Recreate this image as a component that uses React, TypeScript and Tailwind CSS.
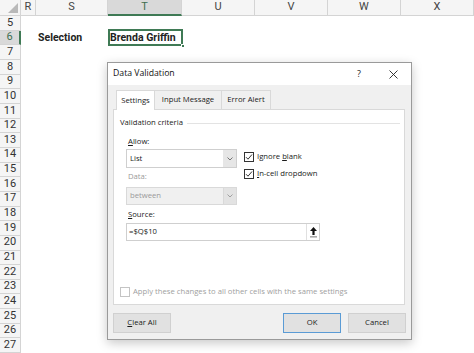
import React from "react";

const cols = [
  { l: "R", w: "w-[15px]" },
  { l: "S", w: "w-[72px]" },
  { l: "T", w: "w-[74px]" },
  { l: "U", w: "w-[73px]" },
  { l: "V", w: "w-[73px]" },
  { l: "W", w: "w-[73px]" },
  { l: "X", w: "w-[73px]" },
];

function Check({ checked, disabled }: { checked?: boolean; disabled?: boolean }) {
  return (
    <div
      className={
        disabled
          ? "w-[10px] h-[10px] border border-[#c4c4c4] bg-white shrink-0"
          : "w-[10px] h-[10px] border border-[#333333] bg-white shrink-0 flex items-center justify-center"
      }
    >
      {checked && (
        <svg width="8" height="8" viewBox="0 0 8 8">
          <path d="M1 4.2 L3 6.2 L7 1.5" fill="none" stroke="#333" strokeWidth="1" />
        </svg>
      )}
    </div>
  );
}

function Chevron({ color }: { color: string }) {
  return (
    <svg width="6" height="4" viewBox="0 0 6 4">
      <path d="M0.5 0.5 L3 3 L5.5 0.5" fill="none" stroke={color} strokeWidth="0.9" />
    </svg>
  );
}

export default function App() {
  const rows = Array.from({ length: 23 }, (_, i) => i + 5);
  return (
    <div className="relative w-[474px] h-[353px] overflow-hidden bg-white font-['Roboto',sans-serif]">
      {/* Column headers */}
      <div className="flex h-[16px]">
        <div className="relative w-[21px] h-[16px] bg-[#f5f5f5] border-r border-b border-[#d4d4d4]">
          <svg className="absolute right-[2px] bottom-[2px]" width="10" height="10" viewBox="0 0 10 10">
            <path d="M10 0 L10 10 L0 10 Z" fill="#b9b9b9" />
          </svg>
        </div>
        {cols.map((c) =>
          c.l === "T" ? (
            <div
              key={c.l}
              className={`${c.w} h-[16px] flex items-center justify-center bg-[#d9d9d9] border-r border-[#d4d4d4] border-b-2 border-b-[#3f7a55] text-[11px] text-[#3f6e50]`}
            >
              {c.l}
            </div>
          ) : (
            <div
              key={c.l}
              className={`${c.w} h-[16px] flex items-center justify-center bg-[#f5f5f5] border-r border-b border-[#d4d4d4] text-[11px] text-[#444444]`}
            >
              {c.l}
            </div>
          )
        )}
      </div>

      {/* Rows */}
      {rows.map((r) => (
        <div key={r} className="flex h-[14.67px]">
          {r === 6 ? (
            <div className="w-[21px] h-full flex items-center justify-center bg-[#d9d9d9] border-b border-[#d4d4d4] border-r-2 border-r-[#3f7a55] text-[11px] text-[#3f6e50]">
              {r}
            </div>
          ) : (
            <div className="w-[21px] h-full flex items-center justify-center bg-[#f5f5f5] border-r border-b border-[#d4d4d4] text-[11px] text-[#333333]">
              {r}
            </div>
          )}
          <div className="w-[15px] h-full" />
          <div className="w-[72px] h-full flex items-center pl-[2px] text-[10.5px] font-bold text-[#222222]">
            {r === 6 ? "Selection" : ""}
          </div>
          <div className="relative w-[74px] h-full flex items-center pl-[2px] text-[10.5px] font-bold text-[#222222]">
            {r === 6 && (
              <>
                <span>Brenda Griffin</span>
                <div className="absolute left-0 right-[-1px] top-[-2px] bottom-[-1px] border-2 border-[#3f7a55]" />
                <div className="absolute right-[-3px] bottom-[-3px] w-[4px] h-[4px] bg-[#3f7a55] border border-white" />
              </>
            )}
          </div>
          <div className="w-[73px] h-full" />
          <div className="w-[73px] h-full" />
          <div className="w-[73px] h-full" />
          <div className="w-[73px] h-full" />
        </div>
      ))}

      {/* Dialog */}
      <div className="absolute left-[107px] top-[62px] w-[305px] h-[278px] border border-[#9a9a9a] bg-[#f0f0f0] shadow-[0_3px_10px_rgba(0,0,0,0.22)] flex flex-col font-['Open_Sans',sans-serif] text-[7.7px] text-[#1b1b1b]">
        {/* Title */}
        <div className="h-[22px] bg-white flex items-center pl-[5px] shrink-0">
          <span className="text-[8.7px] text-[#111111]">Data Validation</span>
          <span className="ml-auto text-[9px] text-[#222222] mr-[28px]">?</span>
          <svg className="mr-[13px]" width="9" height="9" viewBox="0 0 9 9">
            <path d="M0.5 0.5 L8.5 8.5 M8.5 0.5 L0.5 8.5" stroke="#222" strokeWidth="0.9" />
          </svg>
        </div>

        <div className="flex-1 flex flex-col pl-[5px] pr-[6px]">
          {/* Tabs */}
          <div className="flex h-[19px] mt-[5px] pl-[3px] shrink-0">
            <div className="w-[39px] h-[20px] bg-white border border-b-0 border-[#d9d9d9] flex items-center justify-center z-10">
              Settings
            </div>
            <div className="w-[67px] h-[19px] bg-[#f0f0f0] border border-l-0 border-b-0 border-[#d9d9d9] flex items-center justify-center">
              Input Message
            </div>
            <div className="w-[49px] h-[19px] bg-[#f0f0f0] border border-l-0 border-b-0 border-[#d9d9d9] flex items-center justify-center">
              Error Alert
            </div>
          </div>

          {/* Panel */}
          <div className="h-[196px] bg-white border border-[#d9d9d9] flex flex-col shrink-0">
            <div className="mt-[7px] h-[12px] flex items-center pl-[6px] pr-[4px]">
              <span className="text-[#1b1b1b]">Validation criteria</span>
              <div className="flex-1 h-px bg-[#e3e3e3] ml-[4px]" />
            </div>

            <div className="flex ml-[12px]">
              <div className="w-[111px] flex flex-col">
                <div className="mt-[7px] h-[12px] flex items-center pl-[2px]">
                  <span><span className="underline">A</span>llow:</span>
                </div>
                <div className="mt-[1px] h-[19px] border border-[#cfcfcf] bg-white flex items-center">
                  <span className="pl-[3px] flex-1">List</span>
                  <div className="w-[13px] h-full bg-[#e6e6e6] flex items-center justify-center">
                    <Chevron color="#666" />
                  </div>
                </div>
                <div className="mt-[3px] h-[12px] flex items-center pl-[2px] text-[#9a9a9a]">Data:</div>
                <div className="mt-[4px] h-[18px] border border-[#d9d9d9] bg-[#f0f0f0] flex items-center">
                  <span className="pl-[3px] flex-1 text-[#9a9a9a]">between</span>
                  <div className="w-[13px] h-full bg-[#e3e3e3] border-l border-[#d9d9d9] flex items-center justify-center">
                    <Chevron color="#999" />
                  </div>
                </div>
              </div>
              <div className="ml-[7px] mt-[23px] flex flex-col gap-[7px]">
                <div className="flex items-center h-[10px] gap-[3px]">
                  <Check checked />
                  <span>
                    Ignore <span className="underline">b</span>lank
                  </span>
                </div>
                <div className="flex items-center h-[10px] gap-[3px]">
                  <Check checked />
                  <span>
                    <span className="underline">I</span>n-cell dropdown
                  </span>
                </div>
              </div>
            </div>

            <div className="ml-[12px] mt-[4px] h-[12px] flex items-center pl-[2px]">
              <span><span className="underline">S</span>ource:</span>
            </div>
            <div className="ml-[12px] mt-[2px] w-[194px] h-[18px] border border-[#cfcfcf] bg-white flex items-center">
              <span className="pl-[2px] flex-1">=$Q$10</span>
              <div className="w-[13px] h-full border-l border-[#e0e0e0] flex items-center justify-center">
                <svg width="9" height="12" viewBox="0 0 9 12">
                  <path d="M4.5 1 L8 5 L5.6 5 L5.6 9 L3.4 9 L3.4 5 L1 5 Z" fill="#111" />
                  <rect x="1" y="10.5" width="7" height="0.8" fill="#555" />
                </svg>
              </div>
            </div>

            <div className="flex-1" />

            <div className="flex items-center h-[10px] pl-[6px] gap-[3px] mb-[7px]">
              <Check disabled />
              <span className="text-[#a0a0a0]">Apply these changes to all other cells with the same settings</span>
            </div>
          </div>

          {/* Buttons */}
          <div className="flex mt-[8px] h-[20px] shrink-0">
            <div className="w-[58px] h-[20px] bg-[#e1e1e1] border border-[#d0d0d0] flex items-center justify-center">
              <span><span className="underline">C</span>lear All</span>
            </div>
            <div className="ml-auto w-[58px] h-[20px] bg-[#e1e1e1] border border-[#5a9bd5] flex items-center justify-center">
              OK
            </div>
            <div className="ml-[7px] mr-[-1px] w-[58px] h-[20px] bg-[#e1e1e1] border border-[#d0d0d0] flex items-center justify-center">
              Cancel
            </div>
          </div>
        </div>
      </div>
    </div>
  );
}
